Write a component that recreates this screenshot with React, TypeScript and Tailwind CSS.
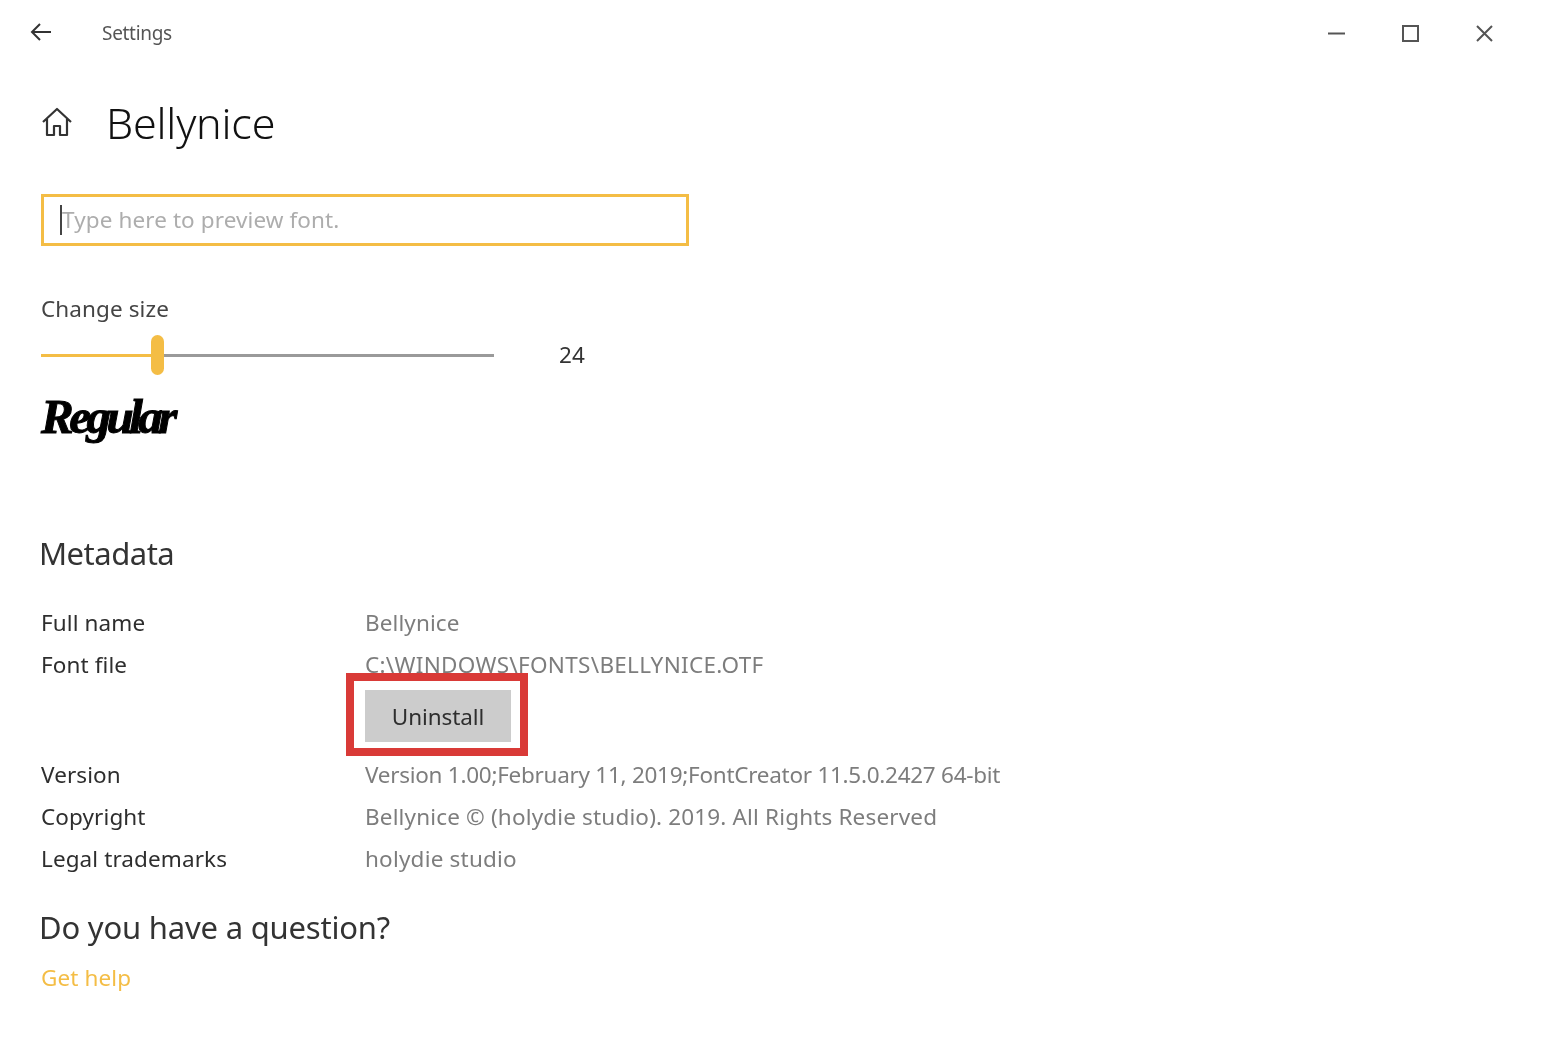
function Row({ label, value, spacing }: { label: string; value: string; spacing?: string }) {
  return (
    <div className="flex h-[42px] items-center">
      <div className="w-[324px] text-[#2e2e2e]">{label}</div>
      <div className={spacing ?? "text-[#7d7d7d]"}>{value}</div>
    </div>
  );
}

export default function App() {
  return (
    <div className="relative h-[1058px] w-[1548px] overflow-hidden bg-white text-[22.5px] leading-none tracking-[0.1px] [font-family:'Noto_Sans','Open_Sans',sans-serif] blur-[0.7px]">
      <header className="flex h-[66px] items-center pl-[30px] pr-[54px]">
        <svg width="22" height="20" viewBox="0 0 22 20" fill="none" stroke="#333" strokeWidth="2" className="mb-[2px]">
          <path d="M21 10H2M10 2l-8 8 8 8" />
        </svg>
        <span className="ml-[50px] text-[19px] tracking-[-0.3px] text-[#555]">Settings</span>
        <div className="ml-auto flex items-center gap-[55px]">
          <svg width="19" height="19" viewBox="0 0 19 19" stroke="#555" strokeWidth="2" fill="none"><path d="M1 9.5h17" /></svg>
          <svg width="19" height="19" viewBox="0 0 19 19" stroke="#555" strokeWidth="2" fill="none"><rect x="2" y="2" width="15" height="15" /></svg>
          <svg width="19" height="19" viewBox="0 0 19 19" stroke="#555" strokeWidth="2" fill="none"><path d="M2 2l15 15M17 2L2 17" /></svg>
        </div>
      </header>

      <main className="pl-[41px]">
        <div className="mt-[26px] flex h-[60px] items-center">
          <svg width="32" height="32" viewBox="0 0 32 32" fill="none" stroke="#333" strokeWidth="2.2" strokeLinejoin="round">
            <path d="M2 16 16 3l14 13M6 13v16h7v-9h6v9h7V13" />
          </svg>
          <h1 className="ml-[33px] text-[43px] font-light tracking-[-0.2px] text-[#111]">Bellynice</h1>
        </div>

        <div className="mt-[42px] flex h-[52px] w-[648px] items-center border-[3px] border-[#f4bd45] pl-[16px]">
          <span className="h-[30px] w-[2px] bg-[#444]" />
          <span className="text-[#adadad]">Type here to preview font.</span>
        </div>

        <div className="mt-[52px] text-[#444]">Change size</div>

        <div className="mt-[15px] flex h-[40px] items-center">
          <div className="relative flex h-[3px] w-[453px]">
            <div className="w-[110px] bg-[#f4bd45]" />
            <div className="flex-1 bg-[#9a9a9a]" />
            <div className="absolute left-[110px] top-[-19px] h-[40px] w-[13px] rounded-full bg-[#f4bd45]" />
          </div>
          <span className="ml-[65px] text-[#333]">24</span>
        </div>

        <div className="mt-[16px] h-[58px] text-[49px] font-bold italic tracking-[-4.5px] text-black [-webkit-text-stroke:1px_black] [font-family:'Liberation_Serif',serif]">Regular</div>

        <h2 className="-ml-[2px] mt-[88px] text-[31px] tracking-[-0.5px] text-[#333]">Metadata</h2>

        <div className="mt-[34px]">
          <Row label="Full name" value="Bellynice" />
          <Row label="Font file" value="C:\WINDOWS\FONTS\BELLYNICE.OTF" spacing="tracking-[0.3px] text-[#7d7d7d]" />
          <div className="ml-[324px] h-[68px] pt-[3px]">
            <button className="relative h-[52px] w-[146px] bg-[#cccccc] pt-[3px] tracking-[-0.1px] text-[#2e2e2e]">
              Uninstall
              <span className="absolute -bottom-[14px] -left-[19px] -right-[17px] -top-[17px] border-[8px] border-[#d93a37]" />
            </button>
          </div>
          <Row label="Version" value="Version 1.00;February 11, 2019;FontCreator 11.5.0.2427 64-bit" spacing="tracking-[-0.27px] text-[#7d7d7d]" />
          <Row label="Copyright" value="Bellynice © (holydie studio). 2019. All Rights Reserved" spacing="tracking-[0.16px] text-[#7d7d7d]" />
          <Row label="Legal trademarks" value="holydie studio" spacing="tracking-[0.2px] text-[#7d7d7d]" />
        </div>

        <h2 className="-ml-[2px] mt-[31px] text-[31px] tracking-[-0.2px] text-[#333]">Do you have a question?</h2>
        <div className="mt-[24px] text-[#f4bd45]">Get help</div>
      </main>
    </div>
  );
}
